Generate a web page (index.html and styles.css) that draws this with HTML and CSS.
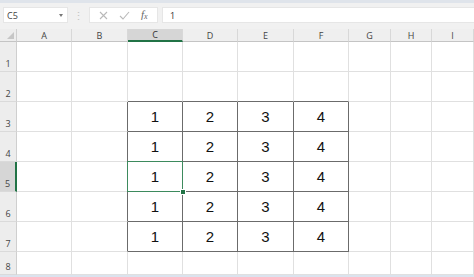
FILE: index.html
```html
<!DOCTYPE html>
<html>
<head>
<meta charset="utf-8">
<link rel="stylesheet" href="styles.css">
</head>
<body>
<div class="app">
  <div class="topstrip"></div>
  <div class="fbar">
    <div class="namebox"><span class="ref">C5</span><span class="caret"></span></div>
    <div class="sep">⋮</div>
    <div class="fxbox">
      <svg class="ico" width="9" height="9" viewBox="0 0 9 9"><path d="M1 1L8 8M8 1L1 8" stroke="#b9b9b9" stroke-width="1.1" fill="none"/></svg>
      <svg class="ico" width="11" height="9" viewBox="0 0 11 9"><path d="M1 5L4 8L10 1" stroke="#b9b9b9" stroke-width="1.1" fill="none"/></svg>
      <span class="fx">f<sub>x</sub></span>
    </div>
    <div class="formula">1</div>
  </div>
  <div class="sheet">
    <div class="corner"><span class="tri"></span></div>
    <div class="ch">A</div><div class="ch">B</div><div class="ch sel">C</div><div class="ch">D</div><div class="ch">E</div><div class="ch">F</div><div class="ch">G</div><div class="ch">H</div><div class="ch">I</div>

    <div class="rh">1</div>
    <div class="c"></div><div class="c"></div><div class="c"></div><div class="c"></div><div class="c"></div><div class="c"></div><div class="c"></div><div class="c"></div><div class="c"></div>

    <div class="rh">2</div>
    <div class="c"></div><div class="c"></div><div class="c tt"></div><div class="c tt"></div><div class="c tt"></div><div class="c tt"></div><div class="c"></div><div class="c"></div><div class="c"></div>

    <div class="rh">3</div>
    <div class="c"></div><div class="c tl"></div><div class="c t">1</div><div class="c t">2</div><div class="c t">3</div><div class="c t">4</div><div class="c"></div><div class="c"></div><div class="c"></div>

    <div class="rh">4</div>
    <div class="c"></div><div class="c tl"></div><div class="c t">1</div><div class="c t">2</div><div class="c t">3</div><div class="c t">4</div><div class="c"></div><div class="c"></div><div class="c"></div>

    <div class="rh sel">5</div>
    <div class="c"></div><div class="c tl"></div><div class="c t active">1<div class="selbox"><span class="handle"></span></div></div><div class="c t">2</div><div class="c t">3</div><div class="c t">4</div><div class="c"></div><div class="c"></div><div class="c"></div>

    <div class="rh">6</div>
    <div class="c"></div><div class="c tl"></div><div class="c t">1</div><div class="c t">2</div><div class="c t">3</div><div class="c t">4</div><div class="c"></div><div class="c"></div><div class="c"></div>

    <div class="rh">7</div>
    <div class="c"></div><div class="c tl"></div><div class="c t">1</div><div class="c t">2</div><div class="c t">3</div><div class="c t">4</div><div class="c"></div><div class="c"></div><div class="c"></div>

    <div class="rh">8</div>
    <div class="c"></div><div class="c"></div><div class="c"></div><div class="c"></div><div class="c"></div><div class="c"></div><div class="c"></div><div class="c"></div><div class="c"></div>
  </div>
  <div class="bottomstrip"></div>
</div>
</body>
</html>
```

FILE: styles.css
```css
* { box-sizing: border-box; }
html, body { margin: 0; padding: 0; background: #ffffff; }
body { width: 474px; height: 277px; overflow: hidden; font-family: "Open Sans", "Noto Sans", sans-serif; }

.app { display: flex; flex-direction: column; width: 474px; height: 277px; }

.topstrip { height: 3px; background: #dfe4eb; }

.fbar {
  height: 26px;
  background: #f1f1f1;
  display: flex;
  align-items: flex-start;
  padding-top: 4px;
  padding-left: 3px;
}
.namebox {
  width: 65px;
  height: 16px;
  background: #ffffff;
  border: 1px solid #e6e6e6;
  display: flex;
  align-items: center;
  justify-content: space-between;
  padding: 0 4px 0 3px;
  font-size: 9px;
  color: #444;
}
.caret {
  width: 0; height: 0;
  border-left: 2px solid transparent;
  border-right: 2px solid transparent;
  border-top: 3px solid #777;
}
.sep {
  width: 21px;
  height: 16px;
  display: flex;
  align-items: center;
  justify-content: center;
  color: #c4c4c4;
  font-size: 11px;
}
.fxbox {
  width: 69px;
  height: 16px;
  background: #ffffff;
  border: 1px solid #e6e6e6;
  display: flex;
  align-items: center;
  justify-content: space-around;
  padding: 0 4px 0 4px;
}
.fx {
  font-family: "Liberation Serif", serif;
  font-style: italic;
  font-size: 11px;
  color: #666;
  line-height: 1;
}
.fx sub { font-size: 8px; vertical-align: -1px; }
.formula {
  flex: 1;
  margin-left: 4px;
  height: 16px;
  background: #ffffff;
  border-top: 1px solid #e6e6e6;
  border-bottom: 1px solid #e6e6e6;
  border-left: 1px solid #e6e6e6;
  padding-left: 7px;
  font-size: 9px;
  color: #333;
  display: flex;
  align-items: center;
}

.sheet {
  flex: 1;
  display: grid;
  grid-template-columns: 17px 55px 56px 55px 55px 56px 55px 42px 41px 42px;
  grid-template-rows: 13px repeat(7, 30px) 1fr;
  overflow: hidden;
}
.corner {
  background: #ededed;
  border-right: 1px solid #cfcfcf;
  border-bottom: 1px solid #c4c4c4;
  position: relative;
}
.tri {
  position: absolute;
  right: 2px; bottom: 2px;
  width: 0; height: 0;
  border-left: 7px solid transparent;
  border-bottom: 7px solid #c6c6c6;
}
.ch {
  background: #efefef;
  border-right: 1px solid #d8d8d8;
  border-bottom: 1px solid #c4c4c4;
  font-size: 9px;
  color: #444;
  display: flex;
  align-items: center;
  justify-content: center;
}
.ch.sel {
  background: #d6d6d6;
  border-bottom: 2px solid #217346;
  color: #333;
}
.rh {
  background: #ededed;
  border-right: 1px solid #cfcfcf;
  border-bottom: 1px solid #dadada;
  font-size: 9px;
  color: #444;
  display: flex;
  align-items: flex-end;
  justify-content: center;
  padding-bottom: 1px;
}
.rh.sel {
  background: #d6d6d6;
  border-right: 2px solid #217346;
}
.c {
  border-right: 1px solid #e0e0e0;
  border-bottom: 1px solid #e0e0e0;
}
.tt { border-bottom-color: #6b6b6b; }
.tl { border-right-color: #6b6b6b; }
.t {
  border-right-color: #6b6b6b;
  border-bottom-color: #6b6b6b;
  font-family: "Liberation Sans", Arial, sans-serif;
  font-size: 15px;
  color: #111;
  display: flex;
  align-items: center;
  justify-content: center;
}
.active { position: relative; }
.selbox {
  position: absolute;
  left: -1px; top: -1px; right: -1px; bottom: -1px;
  border: 1px solid #3d8a5d;
}
.handle {
  position: absolute;
  right: -3px; bottom: -3px;
  width: 4px; height: 4px;
  background: #217346;
  outline: 1px solid #ffffff;
}
.bottomstrip { height: 2px; background: #dbe3ee; }
```
